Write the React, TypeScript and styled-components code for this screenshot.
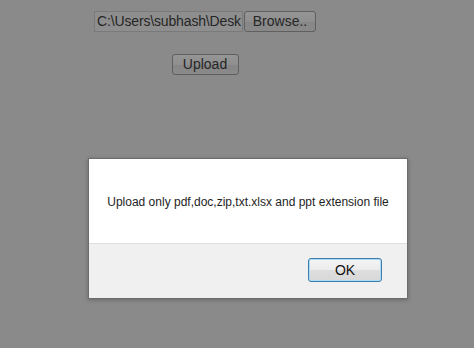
import React from "react";
import styled, { createGlobalStyle } from "styled-components";

const Global = createGlobalStyle`
  html, body {
    margin: 0;
    padding: 0;
    background: #8a8a8a;
    font-family: "Liberation Sans", Arial, sans-serif;
  }
  #root { min-height: 348px; }
`;

const Page = styled.div`
  position: relative;
  width: 474px;
  height: 348px;
  overflow: hidden;
  background: #8a8a8a;
`;

const Form = styled.div`
  width: 410px;
  padding-top: 11px;
  display: flex;
  flex-direction: column;
  align-items: center;
  gap: 22px;
`;

const FileRow = styled.div`
  display: flex;
  align-items: center;
  gap: 1px;
`;

const PathBox = styled.div`
  box-sizing: border-box;
  width: 149px;
  height: 21px;
  padding: 0 0 0 2px;
  border: 1px solid #7a7a7a;
  background: #8e8e8e;
  color: #262626;
  font-size: 14px;
  letter-spacing: -0.15px;
  line-height: 19px;
  white-space: nowrap;
  overflow: hidden;
`;

const DimButton = styled.button<{ $w: number }>`
  box-sizing: border-box;
  width: ${(p) => p.$w}px;
  height: 21px;
  padding: 0;
  border: 1px solid #5f5f5f;
  border-radius: 3px;
  background: linear-gradient(#959595, #8f8f8f 50%, #868686 51%, #8a8a8a);
  color: #262626;
  font-family: "Liberation Sans", Arial, sans-serif;
  font-size: 14px;
  line-height: 19px;
`;

const Dialog = styled.div`
  position: absolute;
  left: 88px;
  top: 158px;
  width: 320px;
  box-sizing: border-box;
  border: 1px solid #6c6c6c;
  box-shadow: 0 1px 4px rgba(0, 0, 0, 0.25);
  background: #ffffff;
  display: flex;
  flex-direction: column;
`;

const Message = styled.div`
  height: 84px;
  display: flex;
  align-items: center;
  justify-content: center;
  color: #1e1e1e;
  font-size: 12px;
  padding-top: 2px;
  box-sizing: border-box;
`;

const Footer = styled.div`
  height: 55px;
  box-sizing: border-box;
  border-top: 1px solid #dfdfdf;
  background: #f0f0f0;
  display: flex;
  justify-content: flex-end;
  align-items: flex-start;
  padding: 14px 25px 0 0;
`;

const OkButton = styled.button`
  box-sizing: border-box;
  width: 74px;
  height: 24px;
  padding: 0;
  border: 1px solid #3d7bad;
  border-radius: 3px;
  background: linear-gradient(#f4f4f4, #ececec 50%, #dedede 51%, #d8d8d8);
  box-shadow: inset 0 0 0 1px #a9dcf5;
  color: #111;
  font-family: "Liberation Sans", Arial, sans-serif;
  font-size: 14px;
  line-height: 22px;
`;

export default function App() {
  return (
    <Page>
      <Global />
      <Form>
        <FileRow>
          <PathBox>C:\Users\subhash\Desk</PathBox>
          <DimButton $w={72}>Browse..</DimButton>
        </FileRow>
        <DimButton $w={67}>Upload</DimButton>
      </Form>
      <Dialog role="dialog">
        <Message>Upload only pdf,doc,zip,txt.xlsx and ppt extension file</Message>
        <Footer>
          <OkButton>OK</OkButton>
        </Footer>
      </Dialog>
    </Page>
  );
}
